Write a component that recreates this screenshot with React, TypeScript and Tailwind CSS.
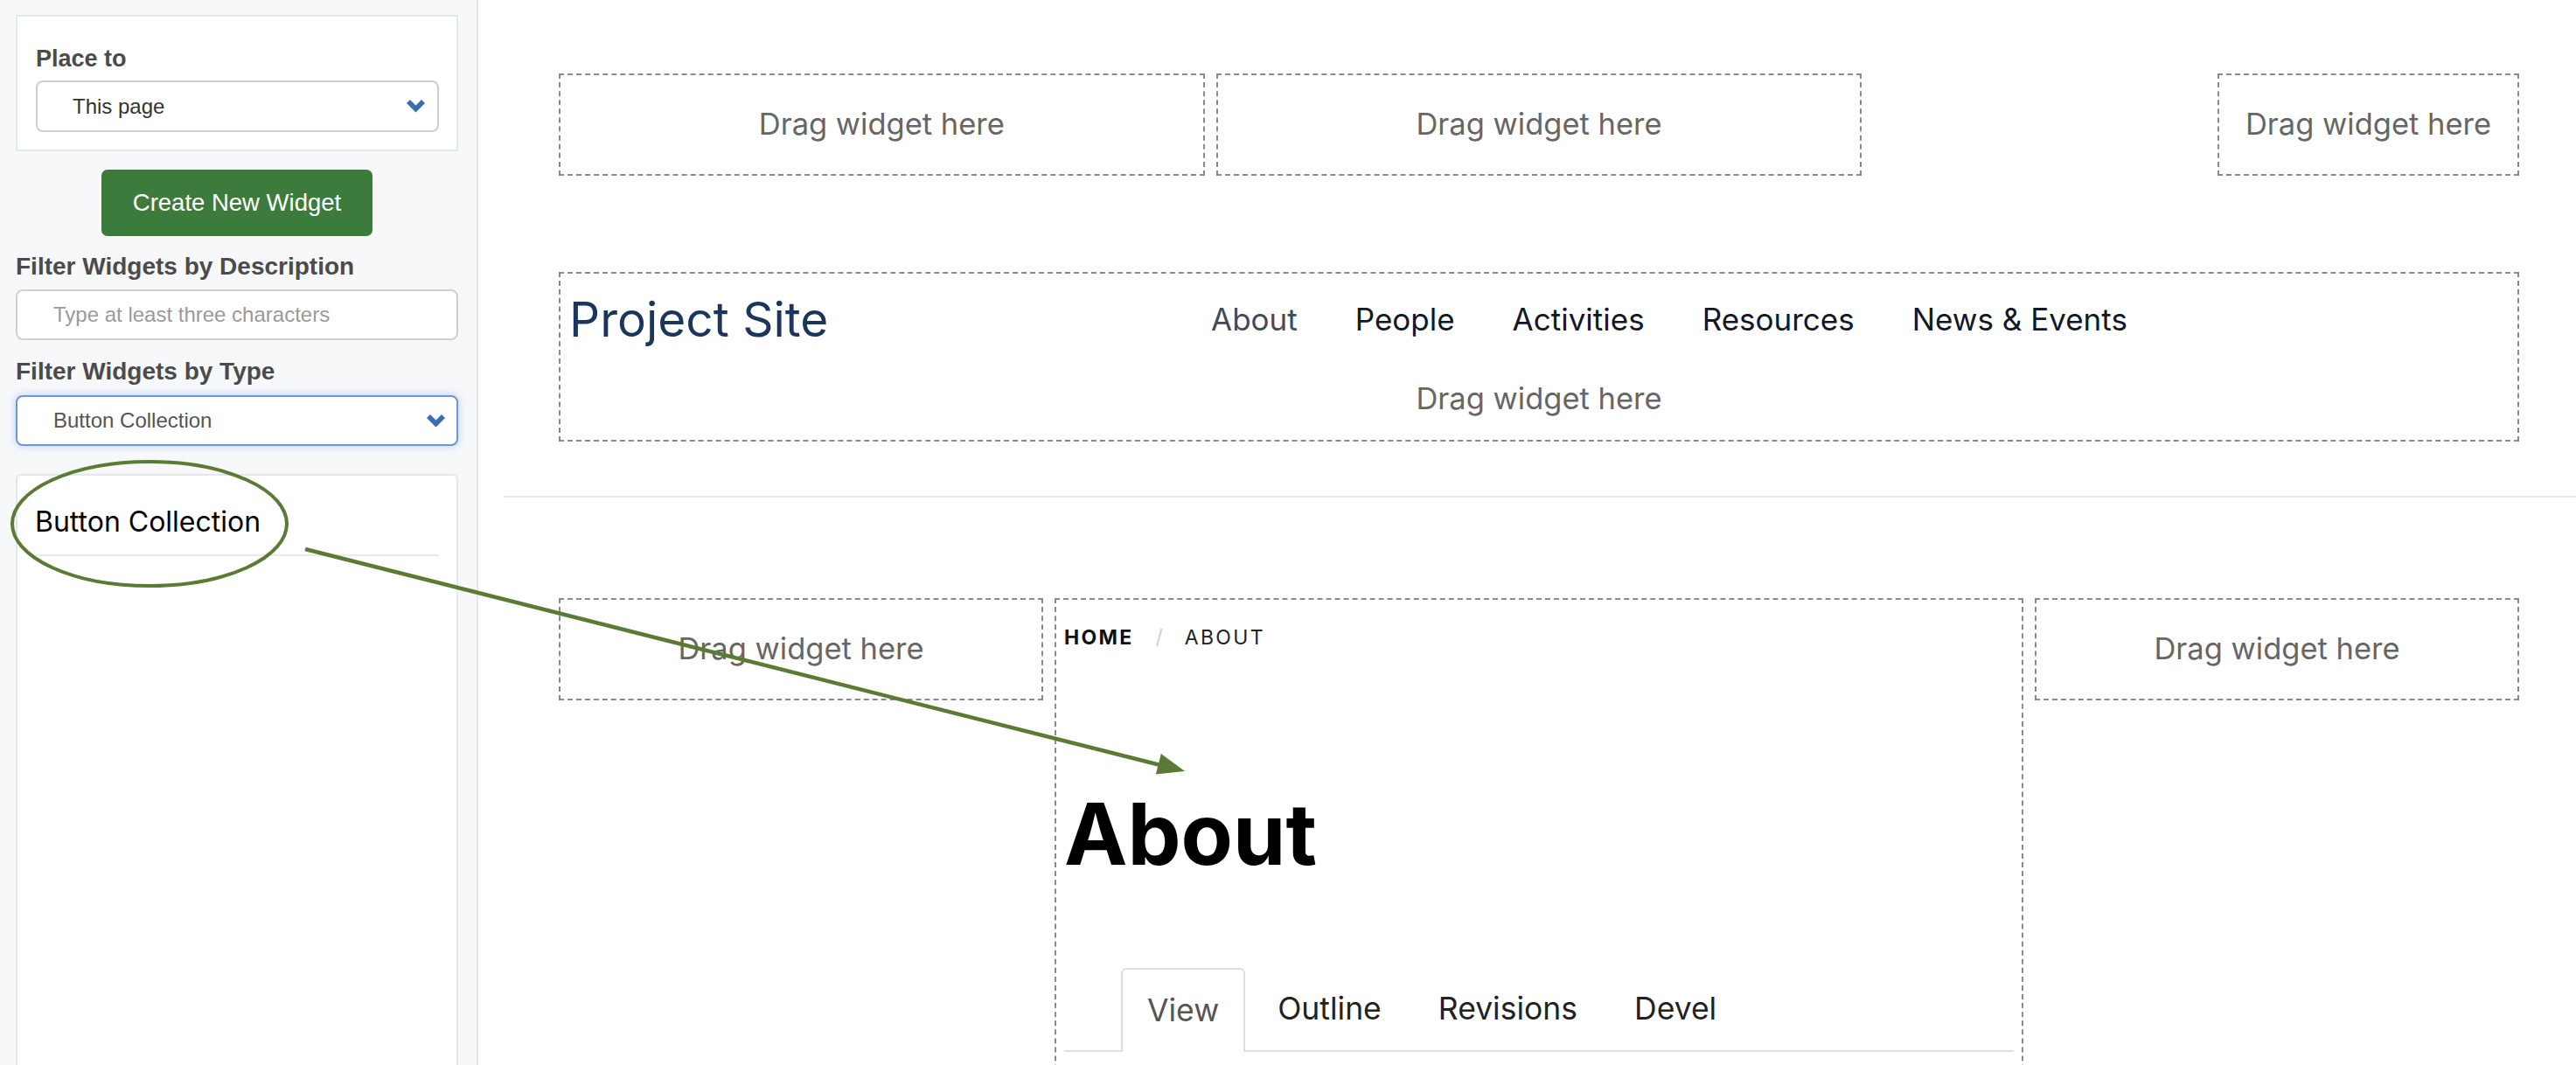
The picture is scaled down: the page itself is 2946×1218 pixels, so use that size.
import React from "react";

const Chevron = () => (
  <svg width="21" height="15" viewBox="0 0 21 15" className="shrink-0">
    <polygon points="0,4 4,0 10.5,6.5 17,0 21,4 10.5,14.5" fill="#3b6db3" />
  </svg>
);

const Drop = ({ className = "" }: { className?: string }) => (
  <div
    className={`h-[117px] border-2 border-dashed border-[#8a8a8a] flex items-center justify-center text-[34.5px] leading-none text-[#666] ${className}`}
  >
    Drag widget here
  </div>
);

export default function App() {
  const sans = { fontFamily: '"Liberation Sans", Arial, sans-serif' };
  const site = { fontFamily: 'Inter, "Noto Sans", sans-serif' };
  return (
    <div className="relative flex w-[2946px] h-[1218px] overflow-hidden bg-white">
      {/* Sidebar */}
      <aside
        className="w-[547px] shrink-0 h-full bg-[#f7f8fa] border-r-2 border-[#e2e6ec] pl-[18px] pr-[21px] pt-[17px] flex flex-col"
        style={sans}
      >
        <div className="bg-white border-2 border-[#e4e8ee] pl-[21px] pr-[20px] pt-[33px] pb-[20px]">
          <div className="text-[27px] leading-[31px] font-bold text-[#4b4b4b]">Place to</div>
          <div className="mt-[9px] h-[59px] rounded-[8px] border-2 border-[#cfcfcf] flex items-center justify-between pl-[40px] pr-[14px] text-[24px] text-[#333]">
            <span>This page</span>
            <Chevron />
          </div>
        </div>
        <div className="flex justify-center mt-[21px]">
          <button className="w-[310px] h-[76px] rounded-[7px] bg-[#3d7b3d] text-white text-[27.5px]">
            Create New Widget
          </button>
        </div>
        <div className="mt-[19px] text-[28px] leading-[32px] font-bold text-[#4b4b4b]">
          Filter Widgets by Description
        </div>
        <div className="mt-[10px] h-[58px] rounded-[8px] border-2 border-[#cfcfcf] bg-white flex items-center pl-[41px] text-[24px] text-[#9a9a9a]">
          Type at least three characters
        </div>
        <div className="mt-[20px] text-[28px] leading-[32px] font-bold text-[#4b4b4b]">
          Filter Widgets by Type
        </div>
        <div className="mt-[11px] h-[58px] rounded-[8px] border-2 border-[#6d96d6] bg-white shadow-[0_0_10px_rgba(102,150,220,0.45)] flex items-center justify-between pl-[41px] pr-[13px] text-[24px] text-[#555]">
          <span>Button Collection</span>
          <Chevron />
        </div>
        <div className="mt-[32px] flex-1 bg-white border-2 border-b-0 border-[#e2e7ee] rounded-t-[6px] px-[20px] pt-[37px]">
          <div className="text-[32px] leading-none text-black pb-[21px] border-b-2 border-[#e8eaee]" style={site}>
            Button Collection
          </div>
        </div>
      </aside>

      {/* Main */}
      <main className="flex-1 pl-[29px] pt-[84px]" style={site}>
        <div className="pl-[63px] pr-[65px]">
          <div className="grid grid-cols-3 gap-[13px]">
            <Drop />
            <Drop />
            <div className="flex justify-end">
              <Drop className="w-[345px]" />
            </div>
          </div>

          <div className="mt-[110px] h-[194px] border-2 border-dashed border-[#8a8a8a] pl-[10px] pt-[20px]">
            <div className="flex items-center h-[64px]">
              <div className="w-[734px] text-[55px] leading-none text-[#1b365d]">Project Site</div>
              <nav className="flex gap-[66px] text-[35px] leading-none text-[#111827]">
                <span className="text-[#454a5a]">About</span>
                <span>People</span>
                <span>Activities</span>
                <span>Resources</span>
                <span>News &amp; Events</span>
              </nav>
            </div>
            <div className="mt-[42px] pr-[10px] text-center text-[34.5px] leading-none text-[#666]">
              Drag widget here
            </div>
          </div>
        </div>

        <div className="mt-[62px] h-[2px] bg-[#e6e7eb]" />

        <div className="pl-[63px] pr-[65px] mt-[115px]">
          <div className="grid grid-cols-[1fr_2fr_1fr] gap-[13px] items-start">
            <Drop />
            <div className="h-[600px] border-2 border-dashed border-[#8a8a8a] px-[9px] pt-[32px]">
              <div className="flex items-center text-[23px] leading-none tracking-[0.1em]">
                <span className="font-bold text-[#111]">HOME</span>
                <span className="mx-[25px] text-[#cfcfcf] tracking-normal">/</span>
                <span className="text-[#222]">ABOUT</span>
              </div>
              <h1 className="mt-[164px] text-[97px] leading-none font-bold text-black">About</h1>
              <div className="mt-[105px] flex border-b-2 border-[#dedede] pl-[65px] gap-[9px]">
                <div className="-mb-[2px] h-[96px] px-[28px] flex items-center border-2 border-b-0 border-[#dedede] rounded-t-[6px] bg-white text-[35.5px] leading-none text-[#555]">
                  View
                </div>
                {["Outline", "Revisions", "Devel"].map((t) => (
                  <div key={t} className="h-[94px] px-[28px] flex items-center text-[35.5px] leading-none text-[#222]">
                    {t}
                  </div>
                ))}
              </div>
            </div>
            <Drop />
          </div>
        </div>
      </main>

      {/* Annotation overlay */}
      <svg className="absolute left-0 top-0 pointer-events-none" width="2946" height="1218">
        <ellipse cx="171" cy="599" rx="157" ry="71" fill="none" stroke="#5b7b35" strokeWidth="4" />
        <line x1="349" y1="628" x2="1325" y2="874.5" stroke="#5b7b35" strokeWidth="4.5" />
        <polygon points="1355,882 1321.9,885.4 1327.8,862.1" fill="#5b7b35" />
      </svg>
    </div>
  );
}
